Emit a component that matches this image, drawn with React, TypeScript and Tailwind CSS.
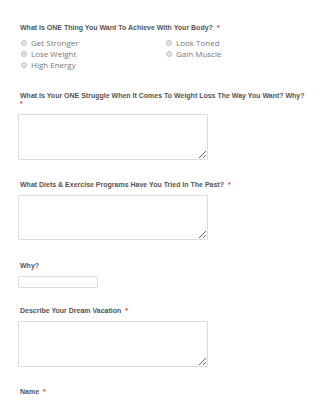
import React from 'react'

const label = 'block text-[7px] leading-[8px] font-bold text-[#555] [font-family:"Liberation_Sans",Arial,sans-serif]'
const field = 'block bg-white border border-[#dcdcdc] rounded-[1px] outline-none'

const Req = () => <span className="text-[#f23a3c] ml-[4px]">*</span>

const Radio = ({ text }: { text: string }) => (
  <label className="flex items-center h-[11px] gap-[4px] text-[8px] text-[#777] [font-family:'Open_Sans',sans-serif]">
    <span className="w-[6px] h-[6px] rounded-full bg-[#e4e4e4] border border-[#c4c4c4] ml-[1px]" />
    {text}
  </label>
)

export default function App() {
  return (
    <div className="w-[325px] h-[400px] overflow-hidden bg-white pl-[20px] pt-[24px]">
      <div className={label}>
        What Is ONE Thing You Want To Achieve With Your Body?<Req />
      </div>
      <div className="grid grid-cols-[145px_1fr] mt-[5.5px] mb-[1px]">
        <Radio text="Get Stronger" />
        <Radio text="Look Toned" />
        <Radio text="Lose Weight" />
        <Radio text="Gain Muscle" />
        <Radio text="High Energy" />
      </div>

      <div className={`${label} mt-[21.5px]`}>
        What Is Your ONE Struggle When It Comes To Weight Loss The Way You Want? Why?
        <br />
        <span className="text-[#f23a3c]">*</span>
      </div>
      <textarea className={`${field} -ml-[2px] mt-[6px] w-[190px] h-[46px]`} />

      <div className={`${label} mt-[21px]`}>
        What Diets &amp; Exercise Programs Have You Tried In The Past?<Req />
      </div>
      <textarea className={`${field} -ml-[2px] mt-[6px] w-[190px] h-[45px]`} />

      <div className={`${label} mt-[22px] text-[7.5px]`}>Why?</div>
      <input className={`${field} -ml-[2px] mt-[6px] w-[80px] h-[12px]`} />

      <div className={`${label} mt-[19px]`}>
        Describe Your Dream Vacation<Req />
      </div>
      <textarea className={`${field} -ml-[2px] mt-[6px] w-[190px] h-[46px]`} />

      <div className={`${label} mt-[21px]`}>
        Name<Req />
      </div>
    </div>
  )
}
